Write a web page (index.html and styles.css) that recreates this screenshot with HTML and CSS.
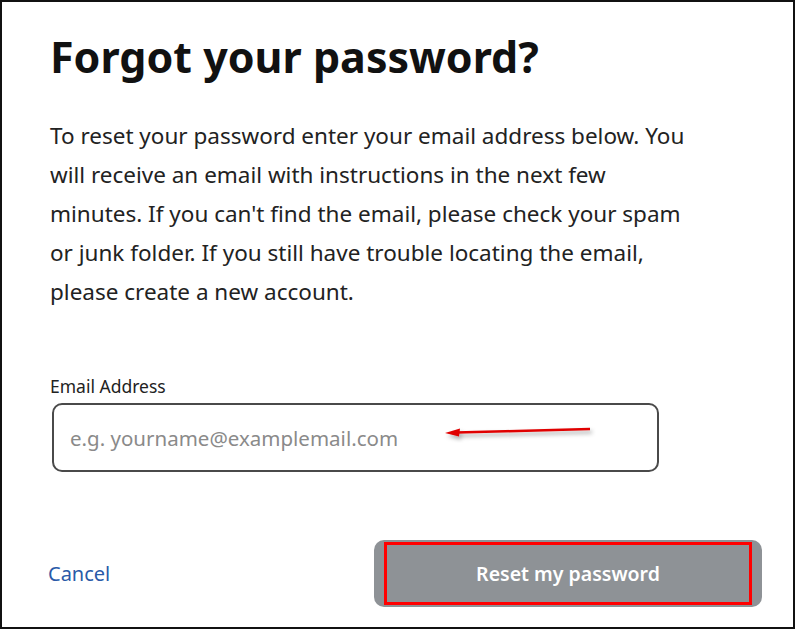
FILE: index.html
```html
<!DOCTYPE html>
<html lang="en">
<head>
  <meta charset="UTF-8" />
  <meta name="viewport" content="width=device-width, initial-scale=1.0"/>
  <title>Forgot your password?</title>
  <link rel="stylesheet" href="styles.css">
</head>
<body>

  <div class="frame">
    <h1>Forgot your password?</h1>
    <p class="intro">To reset your password enter your email address below. You will receive an email with instructions in the next few minutes. If you can't find the email, please check your spam or junk folder. If you still have trouble locating the email, please create a new account.</p>

    <label class="label" for="email">Email Address</label>
    <div class="field">
      <input class="input" id="email" type="email" placeholder="e.g. yourname@examplemail.com">
      <svg class="arrow" width="170" height="20" viewBox="0 0 170 20">
        <defs>
          <filter id="shadow" x="-10%" y="-100%" width="120%" height="300%">
            <feDropShadow dx="2" dy="3" stdDeviation="2" flood-color="#000" flood-opacity="0.35"/>
          </filter>
        </defs>
        <g filter="url(#shadow)">
          <line x1="14" y1="9.5" x2="148" y2="6" stroke="#e00000" stroke-width="2.5"/>
          <polygon points="3,10 18,5.5 17,13.5" fill="#e00000"/>
        </g>
      </svg>
    </div>

    <div class="actions">
      <a class="cancel" href="#">Cancel</a>
      <div class="btn-wrap">
        <button class="reset-btn">Reset my password</button>
      </div>
    </div>
  </div>

</body>
</html>
```

FILE: styles.css
```css
body {
  margin: 0;
  background: #fff;
  font-family: "Noto Sans", "Open Sans", sans-serif;
  color: #1a1a1a;
}
.frame {
  width: 795px;
  height: 629px;
  box-sizing: border-box;
  border: 2px solid #111;
  padding: 25px 48px 0 48px;
}
h1 {
  margin: 0;
  font-size: 43px;
  font-weight: 700;
  color: #111;
  line-height: 60px;
}
.intro {
  margin: 29px 0 0 0;
  width: 642px;
  font-size: 22.5px;
  line-height: 39px;
  color: #222;
}
.label {
  display: block;
  margin: 63px 0 0 0;
  font-size: 17.5px;
  color: #222;
}
.field {
  position: relative;
  margin: 5px 0 0 2px;
  width: 607px;
}
.input {
  width: 100%;
  height: 69px;
  box-sizing: border-box;
  border: 2px solid #4a4a4a;
  border-radius: 10px;
  padding: 0 16px;
  font-family: inherit;
  font-size: 20.5px;
  color: #333;
}
.input::placeholder {
  color: #8a8a8a;
}
.arrow {
  position: absolute;
  left: 390px;
  top: 20px;
}
.actions {
  display: flex;
  align-items: center;
  justify-content: space-between;
  margin: 68px -17px 0 0;
}
.cancel {
  margin-left: -2px;
  color: #2a5aa8;
  text-decoration: none;
  font-size: 20px;
}
.btn-wrap {
  width: 388px;
  height: 67px;
  background: #8e9296;
  border-radius: 10px;
  display: flex;
  justify-content: center;
  align-items: center;
}
.reset-btn {
  width: 368px;
  height: 63px;
  box-sizing: border-box;
  background: #8e9296;
  border: 3px solid #ff0000;
  color: #fff;
  font-family: inherit;
  font-size: 19.5px;
  font-weight: 600;
  cursor: pointer;
}
```
